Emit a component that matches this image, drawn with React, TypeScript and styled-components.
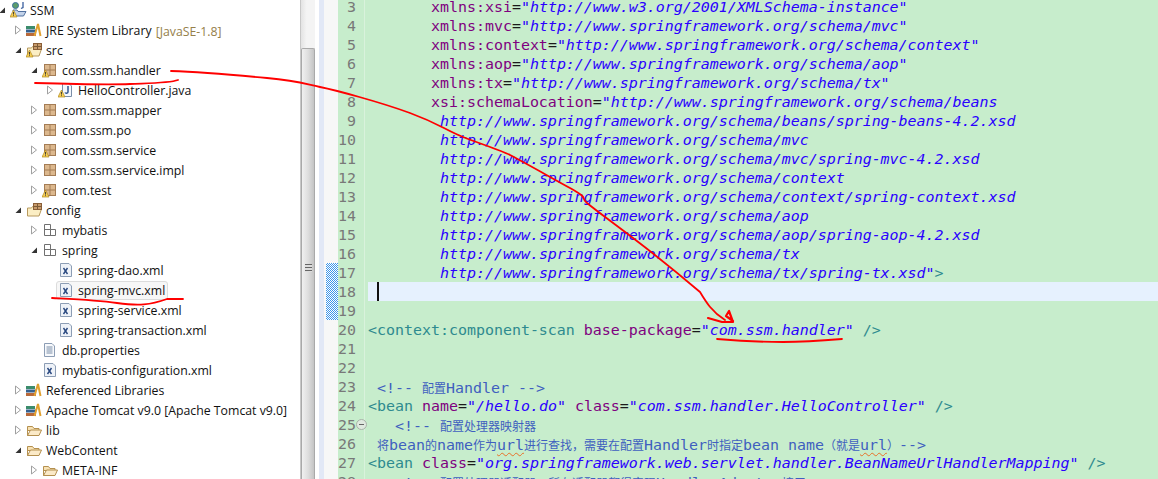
import React from "react";
import styled, { createGlobalStyle } from "styled-components";

const Global = createGlobalStyle`
  html, body { margin: 0; padding: 0; background: #fff; }
  body { width: 1158px; height: 479px; overflow: hidden; }
`;

const Page = styled.div`
  position: relative;
  display: flex;
  width: 1158px;
  height: 479px;
  overflow: hidden;
`;

const TreePanel = styled.div`
  flex: 0 0 300px;
  overflow: hidden;
  background: #fff;
  font-family: "Open Sans", "Noto Sans", sans-serif;
  font-size: 12.3px;
  color: #111;
`;

const Row = styled.div`
  position: relative;
  display: flex;
  align-items: center;
  height: 20px;
  white-space: nowrap;
`;

const RowContent = styled.span<{ $depth: number }>`
  position: relative;
  display: flex;
  align-items: center;
  margin-left: ${(p) => p.$depth * 16 - 6}px;
`;

const Twisty = styled.span`
  flex: 0 0 16px;
  display: flex;
  justify-content: center;
  align-items: center;
`;

const IconBox = styled.span`
  flex: 0 0 17px;
  height: 16px;
  margin-right: 3px;
  display: block;
`;

const Label = styled.span`
  position: relative;
  top: 1px;
  line-height: 20px;
`;

const Deco = styled.span`
  position: relative;
  top: 1px;
  color: #95804a;
  margin-left: 4px;
`;

const HoverBox = styled.span`
  position: absolute;
  left: 56px;
  top: 1px;
  width: 112px;
  height: 19px;
  border: 1px solid #dcdcdc;
  border-radius: 3px;
  background: #f7f7f7;
  box-sizing: border-box;
`;

const Scrollbar = styled.div`
  flex: 0 0 15px;
  background: linear-gradient(90deg, #e3e3e3, #f4f4f4 40%, #f4f4f4);
  border-left: 1px solid #c8c8c8;
  box-sizing: border-box;
  padding-top: 48px;
`;

const Thumb = styled.div`
  height: 431px;
  box-sizing: border-box;
  border: 1px solid #a9a9a9;
  border-bottom: none;
  border-radius: 2px 2px 0 0;
  background: linear-gradient(90deg, #f0f0f0, #dedede 50%, #c4c4c4);
  padding-top: 215px;
`;

const Grip = styled.div`
  width: 7px;
  height: 8px;
  margin: 0 auto;
  background: repeating-linear-gradient(180deg, #666 0 1px, #ddd 1px 3px);
`;

const Gutter = styled.div`
  flex: 0 0 23px;
  display: flex;
  background: #fff;
`;

const GutterStripe = styled.div`
  flex: 0 0 5px;
  margin-left: 4px;
  background: #e2e8f6;
`;

const Ruler = styled.div`
  flex: 1;
  background: #f7f7f7;
  padding-top: 263px;
`;

const Changed = styled.div`
  margin-left: 2px;
  height: 57px;
  background: repeating-conic-gradient(#3d95ea 0 25%, #ffffff 0 50%) 0 0 / 2px 2px;
`;

const Editor = styled.div`
  flex: 1;
  position: relative;
  background: #c7edcc;
  font-family: "DejaVu Sans Mono", "Noto Sans CJK SC", monospace;
  font-size: 14.95px;
  overflow: hidden;
`;

const Lines = styled.div`
  margin-top: -3px;
`;

const Line = styled.div`
  position: relative;
  display: flex;
  height: 19px;
  line-height: 21px;
  white-space: pre;
`;

const LineNo = styled.span`
  flex: 0 0 18px;
  text-align: right;
  color: #787878;
`;

const Divider = styled.span`
  flex: 0 0 9px;
  border-right: 1px solid #d9f2dc;
  box-sizing: border-box;
`;

const Code = styled.span<{ $current?: boolean }>`
  flex: 1;
  margin-left: 3px;
  position: relative;
  background: ${(p) => (p.$current ? "#e6f1fe" : "transparent")};
`;

const Caret = styled.span`
  position: absolute;
  left: 9px;
  top: 0;
  width: 2px;
  height: 19px;
  background: #111;
`;

const Tag = styled.span`color: #2e8a8f;`;
const Attr = styled.span`color: #7f007f;`;
const Eq = styled.span`color: #1a1a1a;`;
const Str = styled.span`color: #2a00ff; font-style: italic;`;
const Cmt = styled.span`color: #3f5fbf;`;
const Cjk = styled.span`
  font-family: "Noto Sans CJK SC", sans-serif;
  font-size: 12px;
`;
const Squiggle = styled.span`
  text-decoration: underline wavy #e8702a 1px;
  text-underline-offset: 2px;
`;

const Fold = styled.span`
  position: absolute;
  left: 18px;
  top: 4px;
  width: 9px;
  height: 9px;
  border-radius: 50%;
  border: 1px solid #a9b3a9;
  background: #dfe9df;
  &::after {
    content: "";
    position: absolute;
    left: 2px;
    right: 2px;
    top: 4px;
    height: 1px;
    background: #666;
  }
`;

const Ink = styled.svg`
  position: absolute;
  left: 0;
  top: 0;
  pointer-events: none;
`;

const Arrow = ({ open }: { open?: boolean }) =>
  open ? (
    <svg width="8" height="8" viewBox="0 0 8 8">
      <path d="M7 1.5V7H1.5z" fill="#333" />
    </svg>
  ) : (
    <svg width="8" height="10" viewBox="0 0 8 10">
      <path d="M1.5 1 6.5 5 1.5 9z" fill="#fff" stroke="#a0a0a0" />
    </svg>
  );

const Warn = () => (
  <>
    <path d="M3.5 8 7 15H0z" fill="#f7cf55" stroke="#b08a20" strokeWidth=".7" />
    <path d="M3.5 10v2.600M3.500 13.300v.8" stroke="#333" strokeWidth=".9" />
  </>
);

type Kind =
  | "project" | "lib" | "srcfolder" | "pkg" | "java" | "grayPkg"
  | "xml" | "props" | "folder";

const Icon = ({ kind, warn }: { kind: Kind; warn?: boolean }) => (
  <IconBox>
    <svg width="17" height="16" viewBox="0 0 17 16">
      {kind === "project" && (
        <>
          <path d="M3 8h4l1 1.500h8L13.500 14H4z" fill="#c3d3ea" stroke="#51709f" />
          <circle cx="5.500" cy="3.500" r="3" fill="#5c9c6a" stroke="#3a6f9e" />
          <path d="M13 0v5.500l-2 1" stroke="#3a5f9e" strokeWidth="1.300" fill="none" />
          {warn && <Warn />}
        </>
      )}
      {kind === "lib" && (
        <>
          <rect x="0" y="4" width="9" height="3" fill="#3c8c6c" />
          <rect x="0" y="7.500" width="10" height="3" fill="#35608f" />
          <rect x="0" y="11" width="10" height="3" fill="#b8693a" />
          <path d="M8.500 14 12 2l2.500 12" fill="none" stroke="#e0a030" strokeWidth="2" />
        </>
      )}
      {kind === "srcfolder" && (
        <>
          <path d="M1.500 6h4l1-1.500h6V7h3l-2.500 7H1.500z" fill="#fbeec4" stroke="#b89a5e" />
          <rect x="7.500" y="1.500" width="8" height="6" fill="#c89b6b" stroke="#8a5f38" />
          <path d="M11.500 1.500v6M7.500 4.500h8" stroke="#7b5a36" />
          {warn && <Warn />}
        </>
      )}
      {kind === "pkg" && (
        <>
          <rect x="2.500" y="2.500" width="11" height="11" fill="#dcb88e" stroke="#a47c55" />
          <path d="M8 2.500v11M2.500 8h11" stroke="#a47c55" />
          {warn && <Warn />}
        </>
      )}
      {kind === "grayPkg" && (
        <path
          d="M2.500 2.500h6v5h5v6h-11zM2.500 7.500h6M8.500 7.500v6"
          fill="#fff"
          stroke="#707070"
        />
      )}
      {kind === "java" && (
        <>
          <path d="M4.500 1.500H11l2.500 2.500v10.500h-9z" fill="#f4f7fc" stroke="#7a8ea8" />
          <path d="M10 4v6c0 1.500-2.500 1.500-3 .5" stroke="#31568f" strokeWidth="1.500" fill="none" />
          <Warn />
        </>
      )}
      {kind === "xml" && (
        <>
          <path d="M2.500 1.500H11l2.500 2.500v10.500h-11z" fill="#eef2f8" stroke="#8c9db4" />
          <path d="M5.500 6l4 6M9.500 6l-4 6" stroke="#28477f" strokeWidth="1.400" />
        </>
      )}
      {kind === "props" && (
        <>
          <path d="M2.500 1.500H10l2.500 2.500v10.500h-10z" fill="#f7f9fc" stroke="#8c9db4" />
          <path d="M4.500 5h6M4.500 7h6M4.500 9h6M4.500 11h6" stroke="#7a8ea8" />
        </>
      )}
      {kind === "folder" && (
        <>
          <path d="M1.500 13.500v-9h5l1.500 2h5v2H1.500z" fill="#f8e2b4" stroke="#b4904f" />
          <path d="M1.500 13.500 4.500 8h11l-2.500 5.500z" fill="#fbeac8" stroke="#b4904f" />
        </>
      )}
    </svg>
  </IconBox>
);

type Node = {
  d: number;
  open?: boolean;
  leaf?: boolean;
  kind: Kind;
  warn?: boolean;
  text: string;
  deco?: string;
  hover?: boolean;
};

const tree: Node[] = [
  { d: 0, open: true, kind: "project", warn: true, text: "SSM" },
  { d: 1, kind: "lib", text: "JRE System Library", deco: "[JavaSE-1.8]" },
  { d: 1, open: true, kind: "srcfolder", warn: true, text: "src" },
  { d: 2, open: true, kind: "pkg", warn: true, text: "com.ssm.handler" },
  { d: 3, kind: "java", text: "HelloController.java" },
  { d: 2, kind: "pkg", text: "com.ssm.mapper" },
  { d: 2, kind: "pkg", text: "com.ssm.po" },
  { d: 2, kind: "pkg", warn: true, text: "com.ssm.service" },
  { d: 2, kind: "pkg", text: "com.ssm.service.impl" },
  { d: 2, kind: "pkg", warn: true, text: "com.test" },
  { d: 1, open: true, kind: "srcfolder", text: "config" },
  { d: 2, kind: "grayPkg", text: "mybatis" },
  { d: 2, open: true, kind: "grayPkg", text: "spring" },
  { d: 3, leaf: true, kind: "xml", text: "spring-dao.xml" },
  { d: 3, leaf: true, kind: "xml", text: "spring-mvc.xml", hover: true },
  { d: 3, leaf: true, kind: "xml", text: "spring-service.xml" },
  { d: 3, leaf: true, kind: "xml", text: "spring-transaction.xml" },
  { d: 2, leaf: true, kind: "props", text: "db.properties" },
  { d: 2, leaf: true, kind: "xml", text: "mybatis-configuration.xml" },
  { d: 1, kind: "lib", text: "Referenced Libraries" },
  { d: 1, kind: "lib", text: "Apache Tomcat v9.0 [Apache Tomcat v9.0]" },
  { d: 1, kind: "folder", text: "lib" },
  { d: 1, open: true, kind: "folder", text: "WebContent" },
  { d: 2, kind: "folder", text: "META-INF" },
];

const A = ({ n, v }: { n: string; v: string }) => (
  <>
    <Attr>{n}</Attr>
    <Eq>=</Eq>
    <Str>{v}</Str>
  </>
);

const url = (s: string) => <Str>{"  " + s}</Str>;

const code: { n: number; c?: React.ReactNode; fold?: boolean; current?: boolean }[] = [
  { n: 3, c: <>{"       "}<A n="xmlns:xsi" v={'"http://www.w3.org/2001/XMLSchema-instance"'} /></> },
  { n: 4, c: <>{"       "}<A n="xmlns:mvc" v={'"http://www.springframework.org/schema/mvc"'} /></> },
  { n: 5, c: <>{"       "}<A n="xmlns:context" v={'"http://www.springframework.org/schema/context"'} /></> },
  { n: 6, c: <>{"       "}<A n="xmlns:aop" v={'"http://www.springframework.org/schema/aop"'} /></> },
  { n: 7, c: <>{"       "}<A n="xmlns:tx" v={'"http://www.springframework.org/schema/tx"'} /></> },
  { n: 8, c: <>{"       "}<A n="xsi:schemaLocation" v={'"http://www.springframework.org/schema/beans'} /></> },
  { n: 9, c: <>{"      "}{url("http://www.springframework.org/schema/beans/spring-beans-4.2.xsd")}</> },
  { n: 10, c: <>{"      "}{url("http://www.springframework.org/schema/mvc")}</> },
  { n: 11, c: <>{"      "}{url("http://www.springframework.org/schema/mvc/spring-mvc-4.2.xsd")}</> },
  { n: 12, c: <>{"      "}{url("http://www.springframework.org/schema/context")}</> },
  { n: 13, c: <>{"      "}{url("http://www.springframework.org/schema/context/spring-context.xsd")}</> },
  { n: 14, c: <>{"      "}{url("http://www.springframework.org/schema/aop")}</> },
  { n: 15, c: <>{"      "}{url("http://www.springframework.org/schema/aop/spring-aop-4.2.xsd")}</> },
  { n: 16, c: <>{"      "}{url("http://www.springframework.org/schema/tx")}</> },
  { n: 17, c: <>{"      "}{url('http://www.springframework.org/schema/tx/spring-tx.xsd"')}<Tag>&gt;</Tag></> },
  { n: 18, current: true },
  { n: 19 },
  { n: 20, c: <><Tag>&lt;context:component-scan </Tag><A n="base-package" v={'"com.ssm.handler"'} /><Tag> /&gt;</Tag></> },
  { n: 21 },
  { n: 22 },
  { n: 23, c: <Cmt>{" <!-- "}<Cjk>配置</Cjk>{"Handler -->"}</Cmt> },
  { n: 24, c: <><Tag>&lt;bean </Tag><A n="name" v={'"/hello.do"'} /> <A n="class" v={'"com.ssm.handler.HelloController"'} /><Tag> /&gt;</Tag></> },
  { n: 25, fold: true, c: <Cmt>{"   <!-- "}<Cjk>配置处理器映射器</Cjk></Cmt> },
  { n: 26, c: <Cmt>{" "}<Cjk>将</Cjk>bean<Cjk>的</Cjk>name<Cjk>作为</Cjk><Squiggle>url</Squiggle><Cjk>进行查找，需要在配置</Cjk>Handler<Cjk>时指定</Cjk>bean name<Cjk>（就是</Cjk><Squiggle>url</Squiggle><Cjk>）</Cjk>{"-->"}</Cmt> },
  { n: 27, c: <><Tag>&lt;bean </Tag><A n="class" v={'"org.springframework.web.servlet.handler.BeanNameUrlHandlerMapping"'} /><Tag> /&gt;</Tag></> },
  { n: 28, c: <Cmt>{"   <!-- "}<Cjk>配置处理器适配器，所有适配器都得实现</Cjk>HandlerAdapter<Cjk>接口</Cjk>{" -->"}</Cmt> },
];

export default function App() {
  return (
    <Page>
      <Global />
      <TreePanel>
        {tree.map((t) => (
          <Row key={t.text}>
            {t.hover && <HoverBox />}
            <RowContent $depth={t.d}>
              <Twisty>{!t.leaf && <Arrow open={t.open} />}</Twisty>
              <Icon kind={t.kind} warn={t.warn} />
              <Label>{t.text}</Label>
              {t.deco && <Deco>{t.deco}</Deco>}
            </RowContent>
          </Row>
        ))}
      </TreePanel>
      <Scrollbar>
        <Thumb>
          <Grip />
        </Thumb>
      </Scrollbar>
      <Gutter>
        <GutterStripe />
        <Ruler>
          <Changed />
        </Ruler>
      </Gutter>
      <Editor>
        <Lines>
          {code.map((l) => (
            <Line key={l.n}>
              <LineNo>{l.n}</LineNo>
              {l.fold && <Fold />}
              <Divider />
              <Code $current={l.current}>
                {l.current && <Caret />}
                {l.c}
              </Code>
            </Line>
          ))}
        </Lines>
      </Editor>
      <Ink width="1158" height="479" viewBox="0 0 1158 479" fill="none" stroke="#f00" strokeWidth="1.800" strokeLinecap="round" strokeLinejoin="round">
        <path d="M171 71C200 72 235 75 267 78S305 84 320 87 380 102 410 113 445 130 463 137 500 150 510 155 550 177 570 188 580 197 587 203 612 222 633 238 680 275 700 292C706 302 712 312 725 320" />
        <path d="M35 83C70 84 105 85 130 84S170 83 178 80" />
        <path d="M52 298C70 299 95 300 117 303S150 305 167 299L183 299" />
        <path d="M708 318 722 322 733 322 729 311 726 316 733 321" strokeWidth="2.200" />
        <path d="M717 339C740 341 765 342 783 342S830 340 842 339" />
      </Ink>
    </Page>
  );
}
